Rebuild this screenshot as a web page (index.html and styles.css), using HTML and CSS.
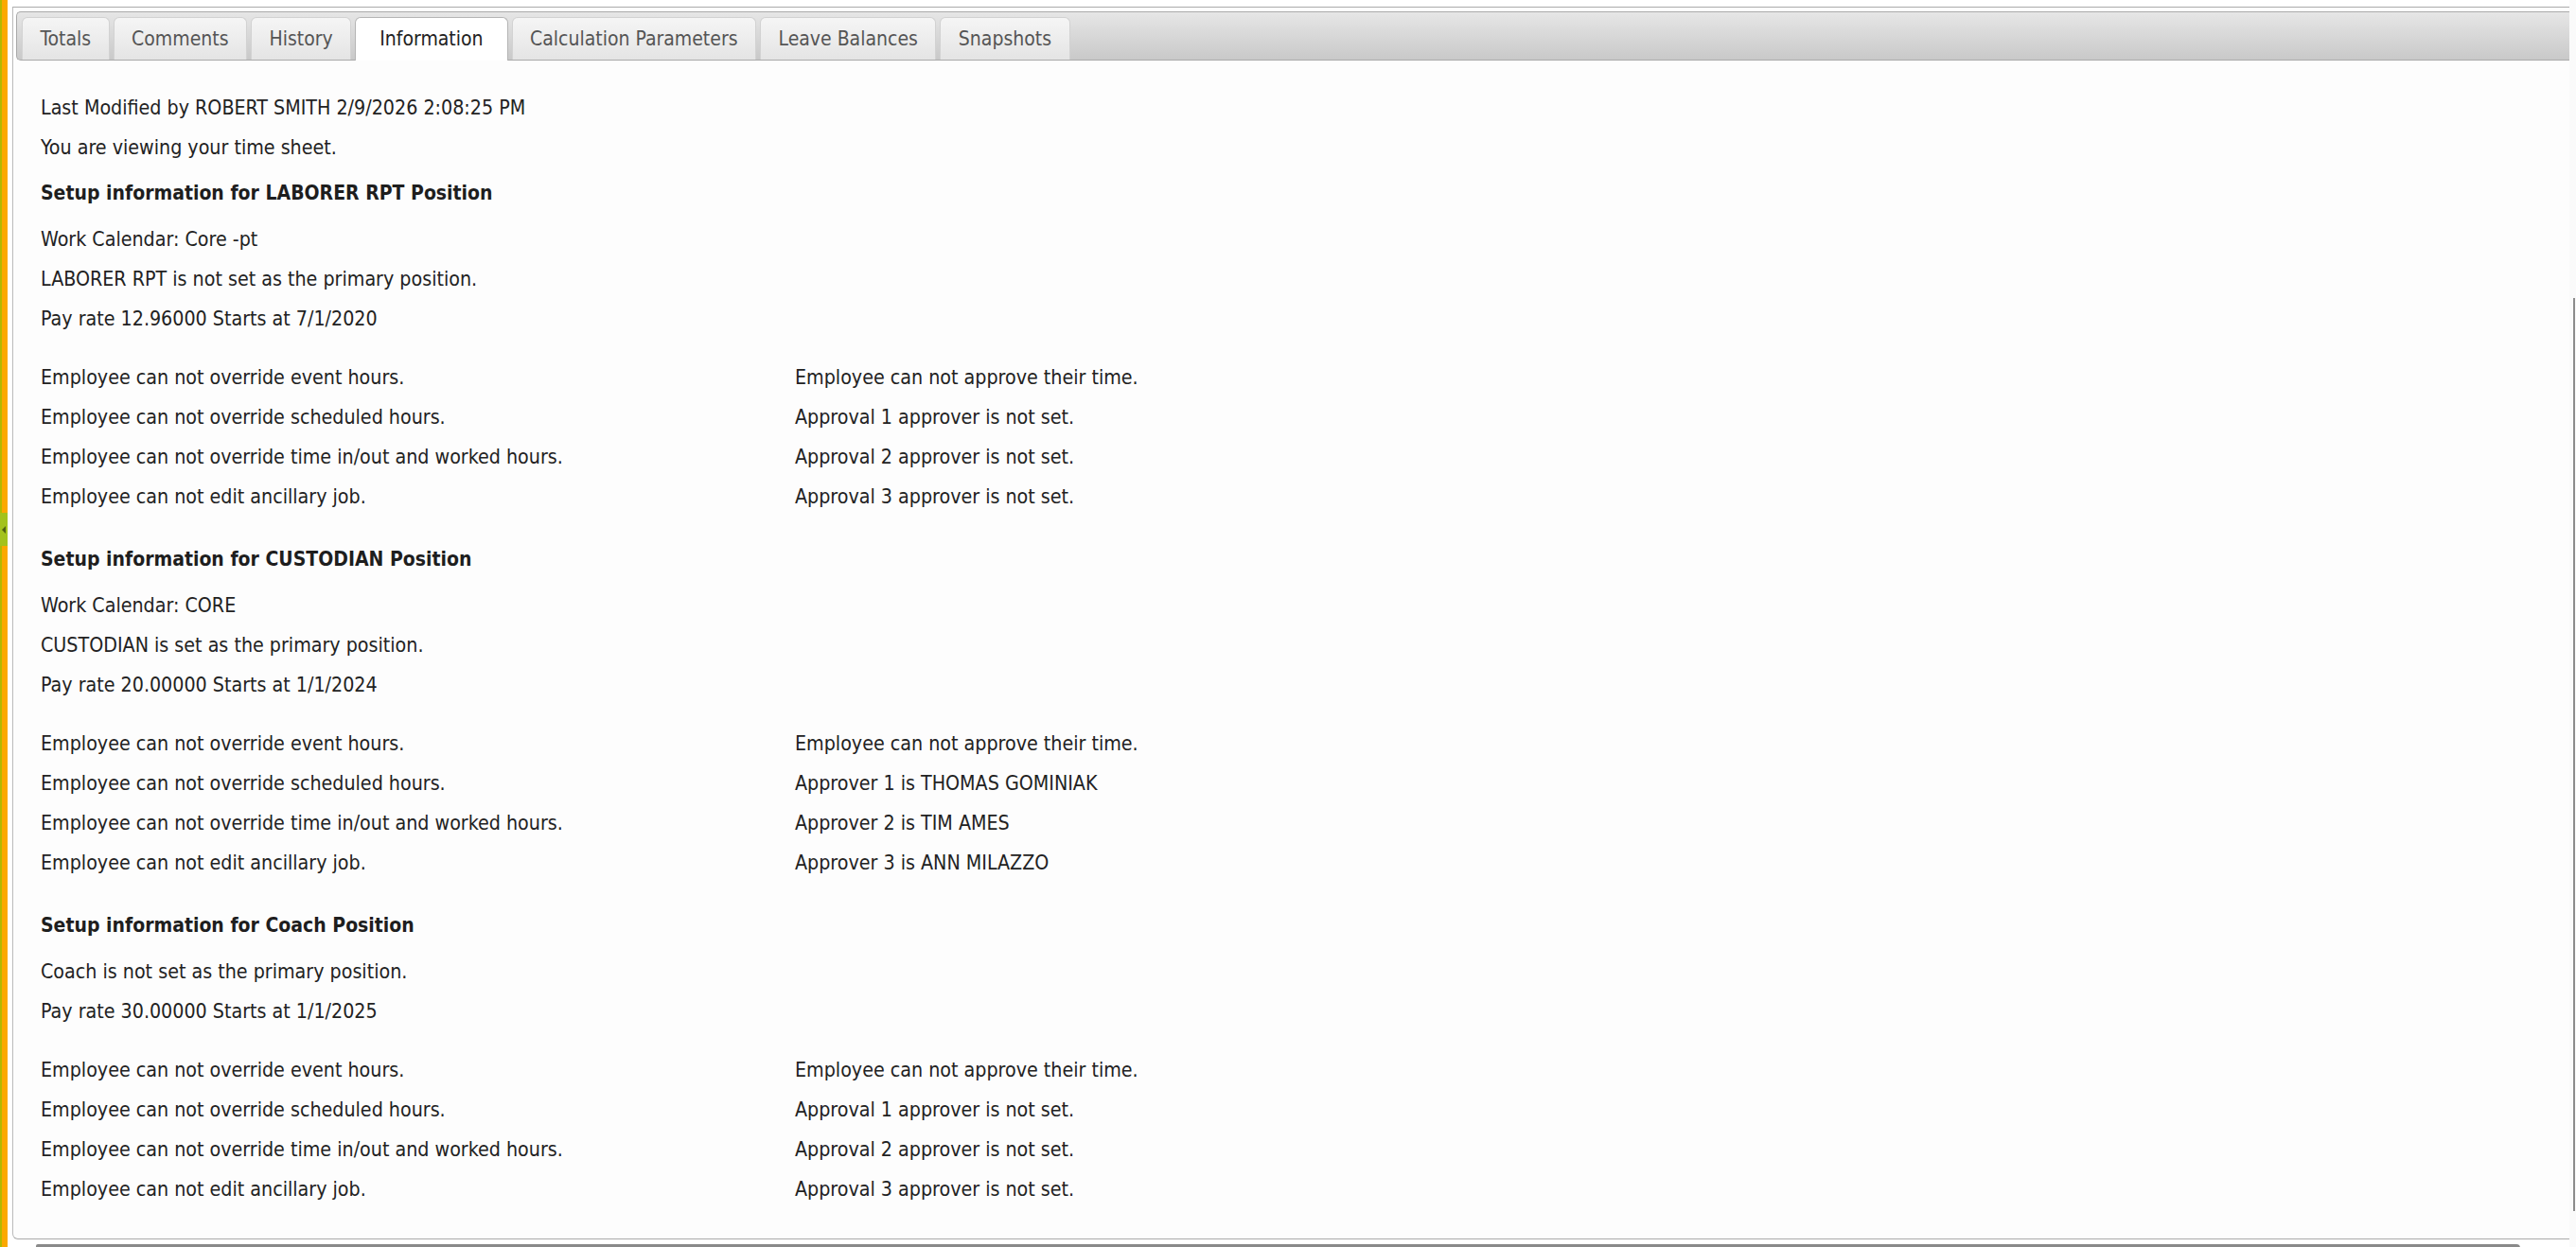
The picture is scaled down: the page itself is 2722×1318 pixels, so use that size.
FILE: index.html
```html
<!DOCTYPE html>
<html lang="en">
<head>
    <meta charset="UTF-8">
    <meta name="viewport" content="width=device-width, initial-scale=1.0">
    <title>Time Sheet - Information</title>
    <link rel="stylesheet" href="styles.css">
</head>
<body>
<div class="page">
    <!-- Side strip with collapse handle -->
    <div class="sidebar">
        <div class="sidebar-handle"><span class="arrow"></span></div>
    </div>

    <div class="main">
        <div class="panel">
            <!-- Tabs -->
            <ul class="tabs">
                <li class="tab">Totals</li>
                <li class="tab">Comments</li>
                <li class="tab">History</li>
                <li class="tab active">Information</li>
                <li class="tab">Calculation Parameters</li>
                <li class="tab">Leave Balances</li>
                <li class="tab">Snapshots</li>
            </ul>

            <div class="content">
                <p>Last Modified by ROBERT SMITH 2/9/2026 2:08:25 PM</p>
                <p>You are viewing your time sheet.</p>

                <section class="position">
                    <h3>Setup information for LABORER RPT Position</h3>
                    <p>Work Calendar: Core -pt</p>
                    <p>LABORER RPT is not set as the primary position.</p>
                    <p>Pay rate 12.96000 Starts at 7/1/2020</p>
                    <div class="rules">
                        <div>Employee can not override event hours.</div>
                        <div>Employee can not approve their time.</div>
                        <div>Employee can not override scheduled hours.</div>
                        <div>Approval 1 approver is not set.</div>
                        <div>Employee can not override time in/out and worked hours.</div>
                        <div>Approval 2 approver is not set.</div>
                        <div>Employee can not edit ancillary job.</div>
                        <div>Approval 3 approver is not set.</div>
                    </div>
                </section>

                <section class="position">
                    <h3>Setup information for CUSTODIAN Position</h3>
                    <p>Work Calendar: CORE</p>
                    <p>CUSTODIAN is set as the primary position.</p>
                    <p>Pay rate 20.00000 Starts at 1/1/2024</p>
                    <div class="rules">
                        <div>Employee can not override event hours.</div>
                        <div>Employee can not approve their time.</div>
                        <div>Employee can not override scheduled hours.</div>
                        <div>Approver 1 is THOMAS GOMINIAK</div>
                        <div>Employee can not override time in/out and worked hours.</div>
                        <div>Approver 2 is TIM AMES</div>
                        <div>Employee can not edit ancillary job.</div>
                        <div>Approver 3 is ANN MILAZZO</div>
                    </div>
                </section>

                <section class="position">
                    <h3>Setup information for Coach Position</h3>
                    <p>Coach is not set as the primary position.</p>
                    <p>Pay rate 30.00000 Starts at 1/1/2025</p>
                    <div class="rules">
                        <div>Employee can not override event hours.</div>
                        <div>Employee can not approve their time.</div>
                        <div>Employee can not override scheduled hours.</div>
                        <div>Approval 1 approver is not set.</div>
                        <div>Employee can not override time in/out and worked hours.</div>
                        <div>Approval 2 approver is not set.</div>
                        <div>Employee can not edit ancillary job.</div>
                        <div>Approval 3 approver is not set.</div>
                    </div>
                </section>
            </div>
        </div>
        <div class="hscroll"></div>
    </div>

    <div class="vscroll"><div class="thumb"></div></div>
</div>
</body>
</html>
```

FILE: styles.css
```css
html, body {
    margin: 0;
    height: 100%;
    overflow: hidden;
    background: #fff;
}
body {
    font-family: "DejaVu Sans Condensed", "DejaVu Sans", sans-serif;
    font-size: 21.25px;
    color: #222;
}
.page {
    display: flex;
    height: 100%;
}

/* Side strip */
.sidebar {
    width: 6px;
    border-left: 2px solid #b3b800;
    background: #fba800;
    padding-top: 542px;
}
.sidebar-handle {
    height: 35px;
    margin-left: -2px;
    width: 8px;
    background: #a3c21c;
    display: flex;
    align-items: center;
    justify-content: center;
}
.arrow {
    width: 0;
    height: 0;
    border-top: 4px solid transparent;
    border-bottom: 4px solid transparent;
    border-right: 4px solid #4f6110;
}

/* Main area */
.main {
    flex: 1;
    padding: 7px 0 0 5px;
}
.panel {
    border-top: 1px solid #aaa;
    border-left: 1px solid #bbb;
    border-bottom: 1px solid #aaa;
    border-bottom-left-radius: 6px;
    background: #fdfdfd;
    padding: 4px 0 0 3px;
}

/* Tabs */
.tabs {
    list-style: none;
    margin: 0;
    padding: 5px 0 0 5px;
    display: flex;
    gap: 4px;
    border: 1px solid #aaa;
    border-right: none;
    border-radius: 5px 0 0 5px;
    background: linear-gradient(#e6e6e6, #c9c9c9);
    height: 45px;
}
.tab {
    padding: 0 18.5px;
    line-height: 44px;
    font-size: 21px;
    color: #555;
    border: 1px solid #d2d2d2;
    border-bottom: none;
    border-radius: 6px 6px 0 0;
    background: linear-gradient(#f5f5f5, #ececec 55%, #e4e4e4);
    cursor: pointer;
}
.tab.active {
    padding: 0 25px;
    background: #fff;
    color: #222;
    border-color: #b5b5b5;
    height: 45px;
}

/* Information content */
.content {
    padding: 37px 26px 39px;
}
.content p {
    margin: 0 0 16px;
    line-height: 26px;
}
.position {
    margin-top: 22px;
}
.position + .position {
    margin-top: 40px;
}
.position h3 {
    margin: 22px 0 23px;
    font-size: 21px;
    line-height: 26px;
    font-weight: bold;
    color: #1e1e1e;
}
.rules {
    margin-top: 36px;
    display: grid;
    grid-template-columns: 797px 1fr;
    row-gap: 16px;
    line-height: 26px;
}

/* Scrollbars */
.hscroll {
    margin: 5px 52px 0 25px;
    height: 4px;
    background: #8a8a8a;
    border-radius: 2px 4px 0 0;
}
.vscroll {
    width: 7px;
    background: #fafafa;
    padding-top: 315px;
}
.thumb {
    margin-left: 4px;
    width: 2px;
    height: 965px;
    background: #8c8c8c;
}
```
